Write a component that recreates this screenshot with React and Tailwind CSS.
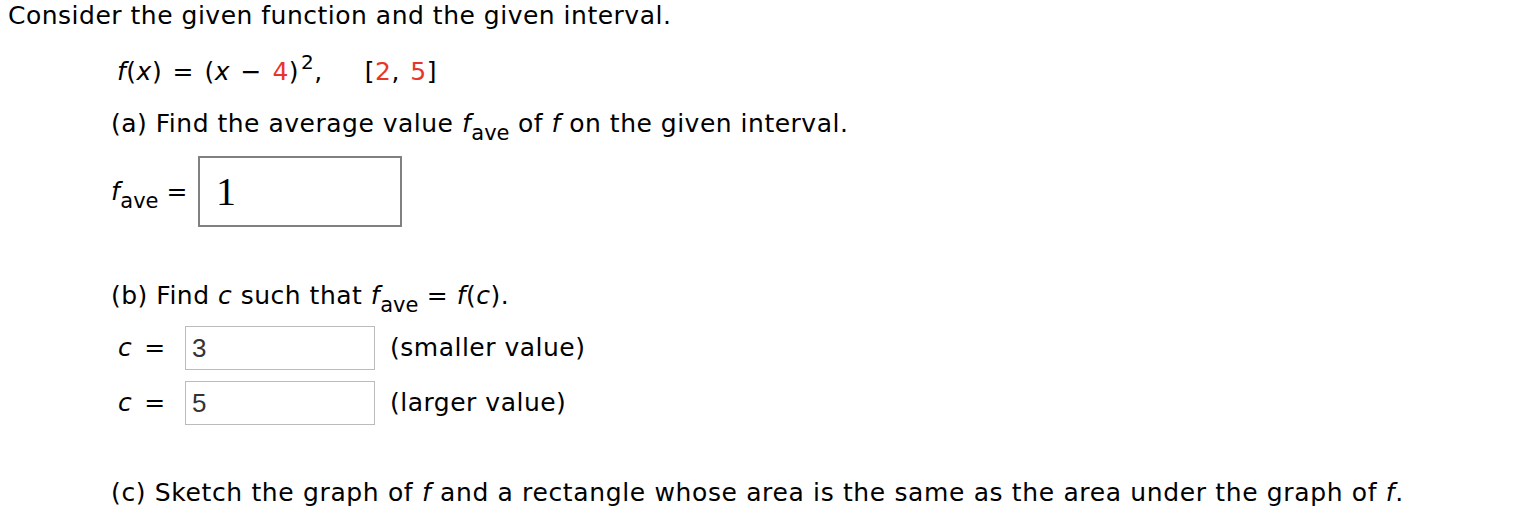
import React from 'react';

const Red = ({ children }) => <span className="text-[#e8352a]">{children}</span>;

const Fave = () => (
  <span>
    <i>f</i>
    <sub className="text-[21px] align-[-3px] not-italic tracking-normal">ave</sub>
  </span>
);

const CRow = ({ value, note }) => (
  <div className="flex items-center">
    <div className="w-[74px] pl-[7px] flex items-center">
      <i>c</i>
      <span className="ml-[12px]">=</span>
    </div>
    <div className="w-[190px] h-[44px] border border-[#bbbbbb] flex items-center pl-[6px] font-['Liberation_Sans',sans-serif] text-[26px] text-[#333] tracking-normal">
      {value}
    </div>
    <span className="ml-[15px]">{note}</span>
  </div>
);

export default function App() {
  return (
    <div className="bg-white min-h-[520px] pl-[8px] font-['DejaVu_Sans',sans-serif] text-[25px] tracking-[0.5px] text-black leading-[32px]">
      <div>Consider the given function and the given interval.</div>

      <div className="ml-[109px] mt-[24px] [word-spacing:2px]">
        <i>f</i>(<i>x</i>) = (<i>x</i> − <Red>4</Red>)<sup className="text-[20px] align-[1px] ml-[2px]">2</sup>,
        <span className="ml-[42px]">
          [<Red>2</Red>, <Red>5</Red>]
        </span>
      </div>

      <div className="ml-[103px] mt-[20px]">
        (a) Find the average value <Fave /> of <i>f</i> on the given interval.
      </div>

      <div className="ml-[103px] mt-[16px] flex items-center">
        <div className="w-[87px] flex items-center">
          <Fave />
          <span className="ml-[8px]">=</span>
        </div>
        <div className="w-[204px] h-[71px] border-2 border-[#808080] flex items-center pl-[16px] font-['Liberation_Serif',serif] text-[40px] tracking-normal">
          1
        </div>
      </div>

      <div className="ml-[103px] mt-[53px]">
        (b) Find <i>c</i> such that <Fave /> = <i>f</i>(<i>c</i>).
      </div>

      <div className="ml-[103px] mt-[14px] flex flex-col gap-[11px]">
        <CRow value="3" note="(smaller value)" />
        <CRow value="5" note="(larger value)" />
      </div>

      <div className="ml-[103px] mt-[52px] tracking-[0.64px]">
        (c) Sketch the graph of <i>f</i> and a rectangle whose area is the same as the area under the graph of <i>f</i>.
      </div>
    </div>
  );
}
